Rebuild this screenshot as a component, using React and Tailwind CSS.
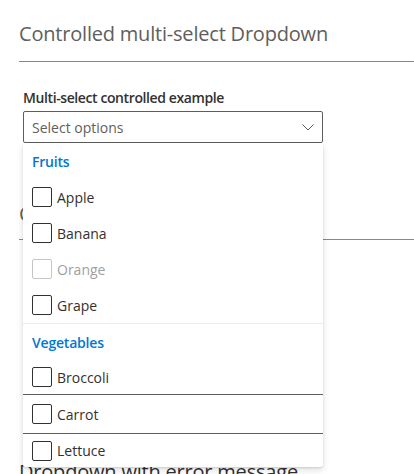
import React from 'react';

const fruits = [
  { name: 'Apple' },
  { name: 'Banana' },
  { name: 'Orange', disabled: true },
  { name: 'Grape' },
];

const Checkbox = ({ disabled }) => (
  <span
    className={`w-[20px] h-[20px] rounded-[2px] border shrink-0 ${
      disabled ? 'border-[#c8c6c4]' : 'border-[#323130]'
    }`}
  />
);

const Option = ({ name, disabled, className = 'h-[36px]' }) => (
  <div className={`flex items-center gap-[5px] pl-[9px] ${className}`}>
    <Checkbox disabled={disabled} />
    <span className={`text-[14px] ${disabled ? 'text-[#a19f9d]' : 'text-[#323130]'}`}>{name}</span>
  </div>
);

const GroupHeader = ({ children }) => (
  <div className="h-[36px] flex items-center pl-[9px] text-[14px] font-semibold tracking-[-0.2px] text-[#0078d4]">
    {children}
  </div>
);

const Chevron = () => (
  <svg width="12" height="7" viewBox="0 0 12 7" fill="none">
    <path d="M0.5 0.5 L6 6 L11.5 0.5" stroke="#605e5c" strokeWidth="1" />
  </svg>
);

const App = () => {
  return (
    <div className="min-h-[474px] bg-white pl-[19px] pt-[20px] overflow-hidden" style={{ fontFamily: '"Segoe UI", "Open Sans", sans-serif' }}>
      {/* Controlled multi-select */}
      <h2 className="text-[20px] leading-[28px] tracking-[-0.2px] text-[#605e5c]">Controlled multi-select Dropdown</h2>
      <div className="mt-[13px] border-b border-[#8a8886]" />

      <div className="pl-[4px] pt-[26px] relative">
        <label className="block text-[14px] leading-[20px] font-semibold tracking-[-0.4px] text-[#323130] mb-[3px]">
          Multi-select controlled example
        </label>
        <div className="relative w-[300px]">
          <div className="h-[32px] border border-[#605e5c] rounded-[2px] flex items-center justify-between pl-[8px] pr-[8px]">
            <span className="text-[14px] text-[#605e5c]">Select options</span>
            <Chevron />
          </div>

          {/* Menu */}
          <div className="absolute left-0 top-[32px] z-10 w-[300px] bg-white rounded-[2px] shadow-[0_3px_7px_rgba(0,0,0,0.13),0_1px_2px_rgba(0,0,0,0.11)]">
            <GroupHeader>Fruits</GroupHeader>
            {fruits.map((f) => (
              <Option key={f.name} {...f} />
            ))}
            <div className="border-b border-[#edebe9]" />
            <GroupHeader>Vegetables</GroupHeader>
            <Option name="Broccoli" className="h-[35px] border-b border-[#605e5c]" />
            <Option name="Carrot" className="h-[39px] border-b border-[#605e5c]" />
            <Option name="Lettuce" className="h-[33px]" />
          </div>
        </div>
      </div>

      {/* Custom */}
      <h2 className="mt-[57px] text-[20px] leading-[28px] tracking-[-0.2px] text-[#605e5c]">Custom Dropdown</h2>
      <div className="mt-[11px] border-b border-[#8a8886]" />
      <div className="h-[218px]" />

      {/* Error */}
      <h2 className="text-[20px] leading-[28px] tracking-[-0.2px] text-[#323130]">Dropdown with error message</h2>
    </div>
  );
};

export default App;
